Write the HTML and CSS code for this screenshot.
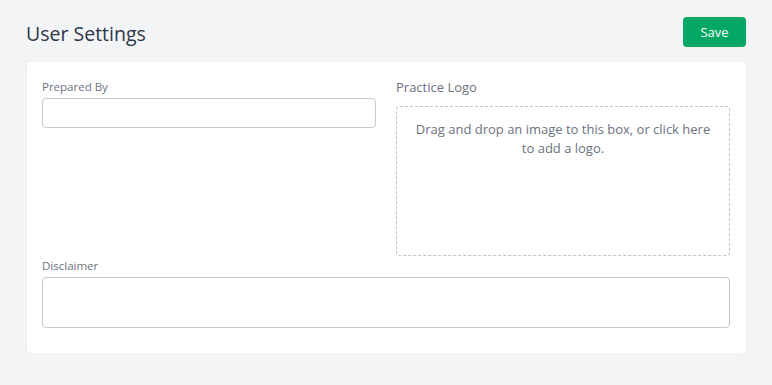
FILE: index.html
```html
<!DOCTYPE html>
<html>
<head>
<meta charset="utf-8">
<link rel="stylesheet" href="styles.css">
</head>
<body>
<div class="page">
  <header class="header">
    <h1 class="title">User Settings</h1>
    <button class="save">Save</button>
  </header>
  <section class="card">
    <div class="row">
      <div class="col">
        <label class="label">Prepared By</label>
        <input class="input" type="text">
      </div>
      <div class="col">
        <label class="label label-lg">Practice Logo</label>
        <div class="dropzone">Drag and drop an image to this box, or click here to add a logo.</div>
      </div>
    </div>
    <div class="field">
      <label class="label">Disclaimer</label>
      <textarea class="textarea"></textarea>
    </div>
  </section>
</div>
</body>
</html>
```
FILE: styles.css
```css
html, body {
  margin: 0;
  padding: 0;
  background: #f3f4f6;
  font-family: "Open Sans", "Noto Sans", sans-serif;
}
.page {
  padding: 17px 26px 0 27px;
}
.header {
  display: flex;
  justify-content: space-between;
  align-items: center;
  height: 30px;
  margin-bottom: 15px;
}
.title {
  margin: 0;
  font-size: 19.5px;
  font-weight: 400;
  color: #2d3748;
  margin-left: -1px;
  padding-top: 2px;
}
.save {
  width: 63px;
  height: 30px;
  border: none;
  border-radius: 4px;
  background: #04a763;
  color: #fff;
  font-family: inherit;
  font-size: 13px;
  padding: 0;
}
.card {
  background: #fff;
  border-radius: 4px;
  box-shadow: 0 0 0 1px #eceef1, 0 1px 2px rgba(0,0,0,0.05);
  padding: 17px 16px 25px 15px;
}
.row {
  display: grid;
  grid-template-columns: 1fr 1fr;
  column-gap: 20px;
}
.col {
  display: flex;
  flex-direction: column;
}
.label {
  font-size: 11.5px;
  color: #6b7280;
  line-height: 16px;
  margin-bottom: 3px;
}
.label-lg {
  font-size: 13px;
  line-height: 16px;
  margin-bottom: 11px;
}
.input {
  height: 30px;
  box-sizing: border-box;
  border: 1px solid #c6c8cc;
  border-radius: 4px;
  margin: 0;
}
.dropzone {
  height: 150px;
  box-sizing: border-box;
  border: 1px dashed #bfc2c7;
  border-radius: 4px;
  text-align: center;
  padding: 13px 16px;
  font-size: 13px;
  line-height: 19px;
  color: #6b7280;
}
.field {
  display: flex;
  flex-direction: column;
  margin-top: 2px;
}
.textarea {
  height: 51px;
  box-sizing: border-box;
  border: 1px solid #c6c8cc;
  border-radius: 4px;
  resize: none;
  margin: 0;
}
```
